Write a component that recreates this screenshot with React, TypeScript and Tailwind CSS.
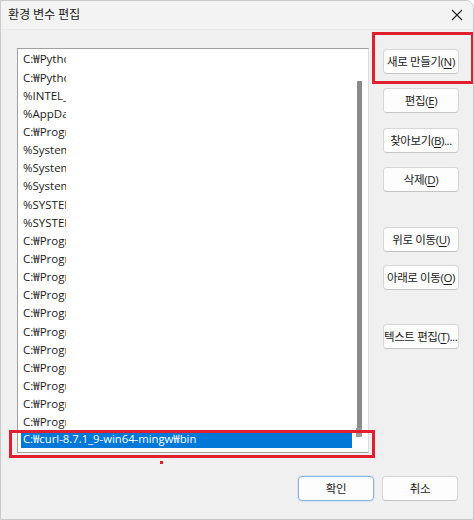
import type { ReactNode } from 'react';

const paths = [
  'C:₩Python312₩Scripts₩',
  'C:₩Python312₩',
  '%INTEL_DEV_REDIST%redist₩intel64₩compiler',
  '%AppData%₩Local₩Microsoft₩WindowsApps',
  'C:₩Program Files₩Common Files₩Oracle₩Java₩javapath',
  '%SystemRoot%₩system32',
  '%SystemRoot%',
  '%SystemRoot%₩System32₩Wbem',
  '%SYSTEMROOT%₩System32₩WindowsPowerShell₩v1.0₩',
  '%SYSTEMROOT%₩System32₩OpenSSH₩',
  'C:₩Program Files₩Git₩cmd',
  'C:₩Program Files₩nodejs₩',
  'C:₩Program Files₩Docker₩Docker₩resources₩bin',
  'C:₩Program Files₩dotnet₩',
  'C:₩Program Files₩PuTTY₩',
  'C:₩Program Files₩Bandizip₩',
  'C:₩Program Files₩MySQL₩MySQL Server 8.0₩bin',
  'C:₩Program Files₩Go₩bin',
  'C:₩Program Files (x86)₩NVIDIA Corporation₩PhysX₩Common',
  'C:₩Program Files₩NVIDIA Corporation₩NVIDIA NvDLISR',
  'C:₩Program Files₩Amazon₩AWSCLIV2₩',
];

const font = { fontFamily: '"Open Sans", "Noto Sans CJK KR", sans-serif' };

function Btn({ children, primary, left }: { children: ReactNode; primary?: boolean; left?: boolean }) {
  return (
    <div
      className={
        'flex h-[25px] w-[76px] items-center overflow-hidden whitespace-nowrap rounded-[4px] border bg-[#fdfdfd] text-[11.5px] tracking-[-0.4px] text-[#1b1b1b] ' +
        (left ? 'justify-start ' : 'justify-center ') +
        (primary ? 'border-[#8fb4da] shadow-[0_0_0_1px_#d5e4f3]' : 'border-[#d6d6d6] border-b-[#c4c4c4]')
      }
    >
      {children}
    </div>
  );
}

function Key({ k }: { k: string }) {
  return (
    <>
      (<span className="underline underline-offset-2">{k}</span>)
    </>
  );
}

export default function App() {
  return (
    <div
      className="relative h-[520px] w-[474px] overflow-hidden rounded-tr-[8px] border border-[#c9c9c9] bg-[#f0f0f0]"
      style={font}
    >
      {/* title bar */}
      <div className="flex h-[29px] items-center justify-between border-b border-[#e9e9e9] bg-[#f3f3f3] pl-[7px] pr-[10px]">
        <span className="text-[12.2px] tracking-[-0.2px] text-[#1a1a1a]">환경 변수 편집</span>
        <svg width="12" height="12" viewBox="0 0 12 12" className="text-[#222]">
          <path d="M1 1L11 11M11 1L1 11" stroke="currentColor" strokeWidth="1.1" />
        </svg>
      </div>

      <div className="flex pl-[16px] pt-[18px]">
        {/* list */}
        <div className="relative flex h-[405px] w-[352px] border border-[#a0a0a0] border-r-[#dcdcdc] bg-white">
          <div className="flex flex-1 flex-col pl-[3px] pt-[1px]">
            {paths.map((p, i) => (
              <div key={i} className="flex h-[18.15px] items-center pl-[2px] text-[11.5px] text-[#1a1a1a]">
                <span className="block w-[43px] overflow-hidden whitespace-nowrap">{p}</span>
              </div>
            ))}
            <div className="flex h-[17px] w-[331px] items-center bg-[#0078d7] pl-[2px] text-[11.3px] text-white">
              <span className="whitespace-nowrap">C:₩curl-8.7.1_9-win64-mingw₩bin</span>
            </div>
          </div>
          {/* scrollbar */}
          <div className="relative w-[16px]">
            <div className="absolute left-[5px] top-[32px] h-[347px] w-[5px] bg-[#8a8a8a]" />
            <div className="absolute left-[4px] top-[379px] h-[9px] w-[6px] bg-[#9a9a9a]" />
          </div>
        </div>

        {/* side buttons */}
        <div className="ml-[14px] flex flex-col pt-[1px]">
          <Btn>
            새로 만들기<Key k="N" />
          </Btn>
          <div className="mt-[14px]">
            <Btn>
              편집<Key k="E" />
            </Btn>
          </div>
          <div className="mt-[15px]">
            <Btn>
              찾아보기<Key k="B" />...
            </Btn>
          </div>
          <div className="mt-[14px]">
            <Btn>
              삭제<Key k="D" />
            </Btn>
          </div>
          <div className="mt-[35px]">
            <Btn>
              위로 이동<Key k="U" />
            </Btn>
          </div>
          <div className="mt-[13px]">
            <Btn>
              아래로 이동<Key k="O" />
            </Btn>
          </div>
          <div className="mt-[34px]">
            <Btn left>
              텍스트 편집<Key k="T" />...
            </Btn>
          </div>
        </div>
      </div>

      {/* bottom buttons */}
      <div className="mt-[23px] flex justify-end gap-[7px] pr-[13px]">
        <div className="h-[26px] w-[77px]">
          <Btn primary>확인</Btn>
        </div>
        <div className="h-[26px] w-[78px]">
          <Btn>취소</Btn>
        </div>
      </div>

      {/* annotation overlays */}
      <div className="absolute left-[371px] top-[31px] h-[52px] w-[102px] border-[3px] border-[#e0202e]" />
      <div className="absolute left-[8px] top-[429px] h-[28px] w-[366px] border-[3px] border-[#e0202e]" />
      <div className="absolute left-[159px] top-[460px] h-[3px] w-[3px] bg-[#e0202e]" />
    </div>
  );
}
